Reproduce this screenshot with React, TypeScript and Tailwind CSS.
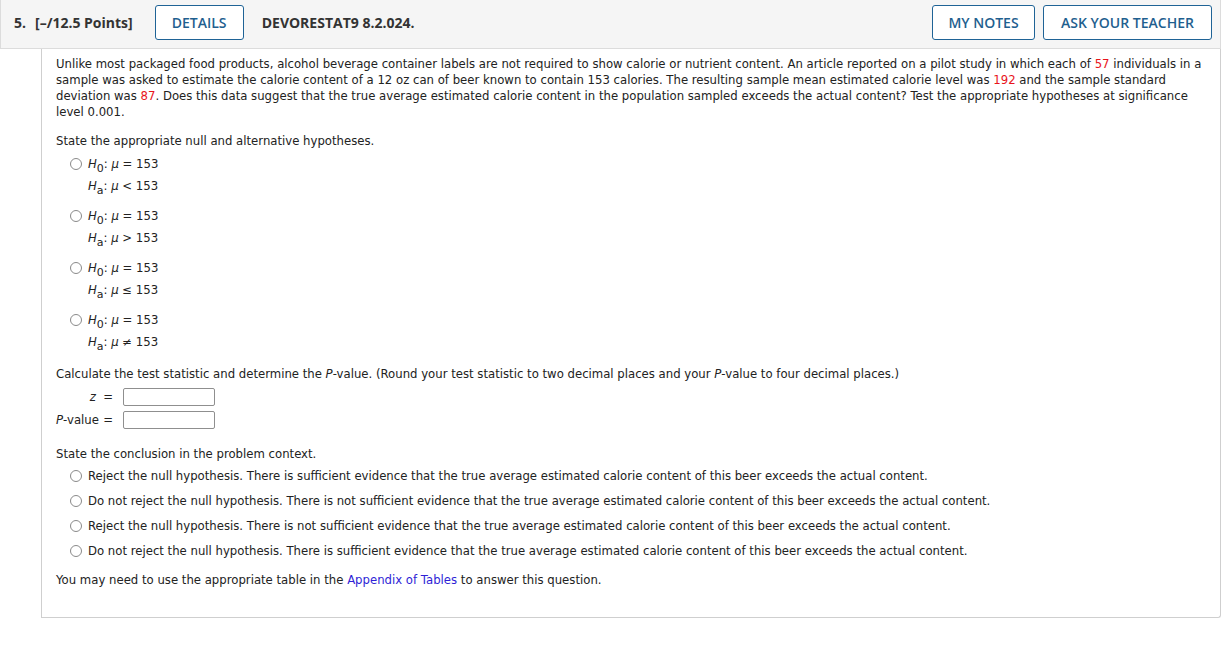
import React from 'react';

const body = { fontFamily: '"DejaVu Sans", Verdana, sans-serif' };

const Radio = () => (
  <span className="inline-block w-[12px] h-[12px] rounded-full border border-[#8a8a8a] bg-white mr-[6px] shrink-0" />
);

const Hyp = ({ sym }: { sym: string }) => (
  <div className="flex flex-col gap-[6px]">
    <div className="flex items-center">
      <Radio />
      <span>
        <i>H</i>
        <sub className="text-[11px] relative top-[4px]">0</sub>: <i>μ</i> = 153
      </span>
    </div>
    <div className="pl-[18px]">
      <i>H</i>
      <sub className="text-[11px] relative top-[4px]">a</sub>: <i>μ</i> {sym} 153
    </div>
  </div>
);

const conclusions = [
  'Reject the null hypothesis. There is sufficient evidence that the true average estimated calorie content of this beer exceeds the actual content.',
  'Do not reject the null hypothesis. There is not sufficient evidence that the true average estimated calorie content of this beer exceeds the actual content.',
  'Reject the null hypothesis. There is not sufficient evidence that the true average estimated calorie content of this beer exceeds the actual content.',
  'Do not reject the null hypothesis. There is sufficient evidence that the true average estimated calorie content of this beer exceeds the actual content.',
];

export default function App() {
  return (
    <div className="w-[1229px] h-[660px] bg-white">
      <div className="w-[1221px]">
        <div
          className="h-[49px] bg-[#f5f5f5] border border-t-0 border-[#dcdcdc] flex items-start pt-[5px] pl-[13px] pr-[8px] text-[14px]"
          style={{ fontFamily: '"Open Sans", sans-serif' }}
        >
          <span className="font-bold text-[#333] leading-[35px]">5.</span>
          <span className="font-bold text-[#333] ml-[9px] leading-[35px]">[–/12.5 Points]</span>
          <button className="ml-[22px] h-[35px] w-[89px] border border-[#1f6396] rounded-[3px] text-[#1f5f8f] font-semibold bg-white">
            DETAILS
          </button>
          <span className="font-bold text-[#333] ml-[18px] leading-[35px]">DEVORESTAT9 8.2.024.</span>
          <div className="ml-auto flex gap-[8px]">
            <button className="h-[35px] w-[103px] border border-[#1f6396] rounded-[3px] text-[#1f5f8f] font-semibold bg-white">
              MY NOTES
            </button>
            <button className="h-[35px] w-[169px] border border-[#1f6396] rounded-[3px] text-[#1f5f8f] font-semibold bg-white">
              ASK YOUR TEACHER
            </button>
          </div>
        </div>
        <div
          className="ml-[41px] h-[569px] border-l border-r border-b border-[#cfcfcf] rounded-br-[3px] pl-[14px] pr-[8px] pt-[7px] text-[11.7px] leading-[16px] text-[#222]"
          style={body}
        >
          <p>
            Unlike most packaged food products, alcohol beverage container labels are not required to show calorie or
            nutrient content. An article reported on a pilot study in which each of{' '}
            <span className="text-[#e8141b]">57</span> individuals in a sample was asked to estimate the calorie content
            of a 12 oz can of beer known to contain 153 calories. The resulting sample mean estimated calorie level was{' '}
            <span className="text-[#e8141b]">192</span> and the sample standard deviation was{' '}
            <span className="text-[#e8141b]">87</span>. Does this data suggest that the true average estimated calorie
            content in the population sampled exceeds the actual content? Test the appropriate hypotheses at
            significance level 0.001.
          </p>
          <p className="mt-[13px]">State the appropriate null and alternative hypotheses.</p>
          <div className="pl-[14px] mt-[7px] flex flex-col gap-[14px]">
            <Hyp sym="<" />
            <Hyp sym=">" />
            <Hyp sym="≤" />
            <Hyp sym="≠" />
          </div>
          <p className="mt-[16px]">
            Calculate the test statistic and determine the <i>P</i>-value. (Round your test statistic to two decimal
            places and your <i>P</i>-value to four decimal places.)
          </p>
          <div className="mt-[6px] flex flex-col gap-[5px]">
            <div className="flex items-center">
              <span className="w-[67px] text-right pr-[10px]">
                <i>z</i>&nbsp; =
              </span>
              <span className="w-[92px] h-[18px] border border-[#8f8f8f] rounded-[2px]" />
            </div>
            <div className="flex items-center">
              <span className="w-[67px] pr-[10px] flex justify-between">
                <span>
                  <i>P</i>-value
                </span>
                <span>=</span>
              </span>
              <span className="w-[92px] h-[18px] border border-[#8f8f8f] rounded-[2px]" />
            </div>
          </div>
          <p className="mt-[17px]">State the conclusion in the problem context.</p>
          <div className="pl-[14px] mt-[6px] flex flex-col gap-[9px]">
            {conclusions.map((c) => (
              <div key={c} className="flex items-center">
                <Radio />
                <span>{c}</span>
              </div>
            ))}
          </div>
          <p className="mt-[13px]">
            You may need to use the appropriate table in the{' '}
            <span className="text-[#2f1fd6]">Appendix of Tables</span> to answer this question.
          </p>
        </div>
      </div>
    </div>
  );
}
